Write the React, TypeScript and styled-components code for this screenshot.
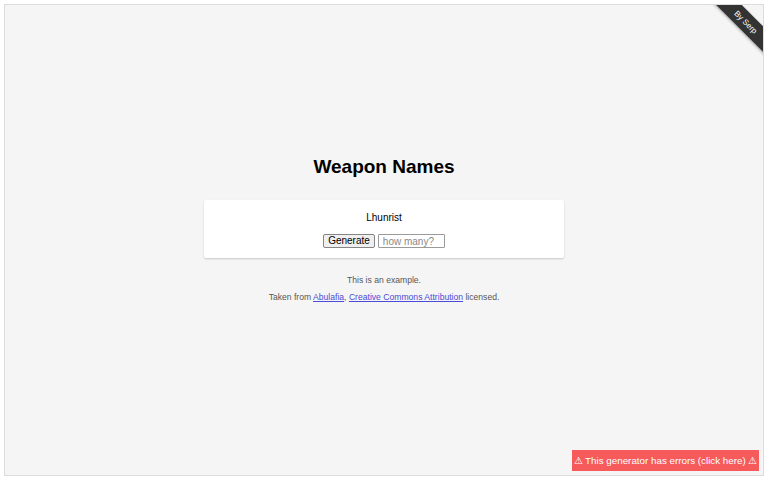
import styled, { createGlobalStyle } from 'styled-components';

const GlobalStyle = createGlobalStyle`
  html, body {
    margin: 0;
    padding: 0;
    background: #ffffff;
  }

  body {
    padding: 4px;
    font-family: 'Liberation Sans', Arial, sans-serif;
  }

  * {
    box-sizing: border-box;
  }
`;

const Frame = styled.div`
  position: relative;
  display: flex;
  flex-direction: column;
  align-items: center;
  width: 760px;
  height: 472px;
  padding-top: 150px;
  border: 1px solid #dcdcdc;
  background: #f5f5f5;
  overflow: hidden;
`;

const Ribbon = styled.div`
  position: absolute;
  top: 8px;
  right: -33px;
  width: 100px;
  height: 18px;
  display: flex;
  align-items: center;
  justify-content: center;
  background: #333333;
  color: #ffffff;
  font: 400 8px 'Liberation Sans', Arial, sans-serif;
  transform: rotate(45deg);
  box-shadow: 0 1px 3px #00000055;
`;

const Title = styled.h1`
  margin: 0;
  font: 700 19px/24px 'Liberation Sans', Arial, sans-serif;
  color: #000000;
`;

const Card = styled.div`
  display: flex;
  flex-direction: column;
  align-items: center;
  gap: 10px;
  width: 360px;
  margin-top: 21px;
  padding: 12px 0 10px;
  background: #ffffff;
  border-radius: 2px;
  box-shadow: 0 1px 2px #00000030;
`;

const Output = styled.div`
  font: 400 10px/12px 'Liberation Sans', Arial, sans-serif;
  color: #000000;
`;

const Controls = styled.div`
  display: flex;
  align-items: center;
  gap: 3px;
  height: 14px;
`;

const Button = styled.button`
  height: 14px;
  padding: 0 4px;
  border: 1px solid #858585;
  border-radius: 2px;
  background: #efefef;
  font: 400 10px/12px 'Liberation Sans', Arial, sans-serif;
  color: #000000;
`;

const CountInput = styled.input`
  width: 67px;
  height: 14px;
  padding: 0 4px;
  border: 1px solid #9a9a9a;
  border-radius: 1px;
  background: #ffffff;
  font: 400 10px/12px 'Liberation Sans', Arial, sans-serif;
  outline: none;

  &::placeholder {
    color: #8a8a8a;
  }
`;

const Note = styled.p<{ $gap: number }>`
  margin: ${({ $gap }) => $gap}px 0 0;
  font: 400 8.6px/12px 'Liberation Sans', Arial, sans-serif;
  color: #555555;
`;

const Link = styled.a`
  color: #4b4bd9;
  text-decoration: underline;
`;

const ErrorBanner = styled.div`
  position: absolute;
  right: 4px;
  bottom: 4px;
  width: 187px;
  height: 21px;
  display: flex;
  align-items: center;
  justify-content: center;
  background: #f65a5a;
  color: #ffffff;
  font: 400 9.8px 'Liberation Sans', Arial, sans-serif;
  white-space: nowrap;
  cursor: pointer;
`;

const App = () => {
  return (
    <>
      <GlobalStyle />
      <Frame>
        <Ribbon>By Serp</Ribbon>
        <Title>Weapon Names</Title>
        <Card>
          <Output>Lhunrist</Output>
          <Controls>
            <Button>Generate</Button>
            <CountInput placeholder='how many?' />
          </Controls>
        </Card>
        <Note $gap={16}>This is an example.</Note>
        <Note $gap={5}>
          Taken from <Link href='#'>Abulafia</Link>,{' '}
          <Link href='#'>Creative Commons Attribution</Link> licensed.
        </Note>
        <ErrorBanner>⚠ This generator has errors (click here) ⚠</ErrorBanner>
      </Frame>
    </>
  );
};

export default App;
